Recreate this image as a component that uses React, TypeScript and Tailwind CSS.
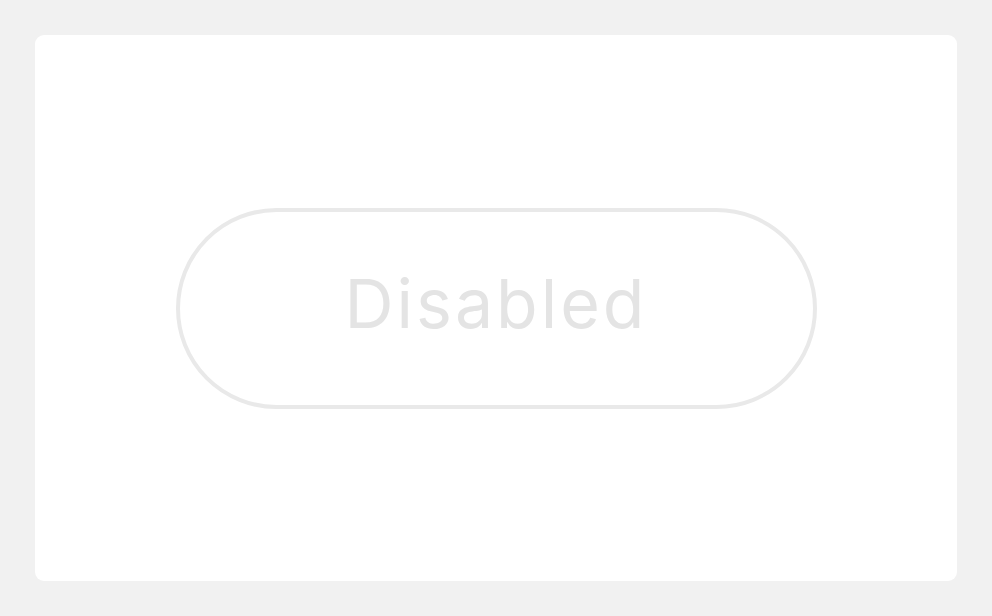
export default function App() {
  return (
    <div className="w-[992px] h-[616px] bg-[#f1f1f1] p-[35px]" style={{ fontFamily: "Inter, 'Noto Sans', sans-serif" }}>
      <div className="w-[922px] h-[546px] bg-white rounded-[9px] flex items-center justify-center">
        <button
          disabled
          className="w-[641px] h-[201px] rounded-full border-[4px] border-[#e9e9e9] bg-white flex items-center justify-center pb-[10px] text-[68px] leading-none font-normal text-[#e4e4e4] tracking-[3px] cursor-not-allowed"
        >
          Disabled
        </button>
      </div>
    </div>
  );
}
